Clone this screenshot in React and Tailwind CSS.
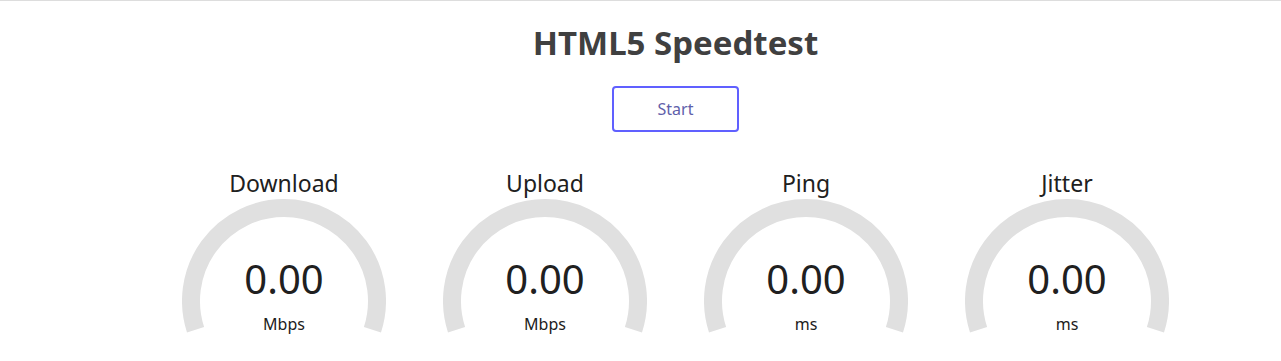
import React from 'react';

// one gauge: label, grey arc, value and unit
const Gauge = ({ label, unit }) => (
  <div className="flex w-[261px] flex-col items-center">
    <div className="h-[30px] text-[23px] leading-[30px] text-[#202020]">{label}</div>
    <div className="relative mt-[1px] flex h-[161px] w-[204px] flex-col items-center">
      <svg className="absolute inset-0" width="204" height="161" viewBox="0 0 204 161">
        <path
          d="M13.55 130.74 A93 93 0 1 1 190.45 130.74"
          fill="none"
          stroke="#e0e0e0"
          strokeWidth="18"
        />
      </svg>
      <div className="relative mt-[56px] text-[40px] leading-[48px] text-[#202020]">0.00</div>
      <div className="relative mt-[11px] text-[16px] leading-[20px] text-[#202020]">{unit}</div>
    </div>
  </div>
);

const App = () => {
  return (
    <div
      className="min-h-[361px] w-full border-t border-[#dddddd] bg-white pl-[70px]"
      style={{ fontFamily: '"Noto Sans", "Open Sans", sans-serif' }}
    >
      <div className="flex flex-col items-center">
        <h1 className="mt-[22px] text-[33px] font-bold leading-[40px] text-[#404040]">HTML5 Speedtest</h1>
        <button className="mt-[23px] h-[46px] w-[127px] rounded-[4px] border-2 border-[#6060ff] text-[16px] text-[#6060aa]">
          Start
        </button>
        <div className="mt-[36px] flex">
          <Gauge label="Download" unit="Mbps" />
          <Gauge label="Upload" unit="Mbps" />
          <Gauge label="Ping" unit="ms" />
          <Gauge label="Jitter" unit="ms" />
        </div>
      </div>
    </div>
  );
};

export default App;
